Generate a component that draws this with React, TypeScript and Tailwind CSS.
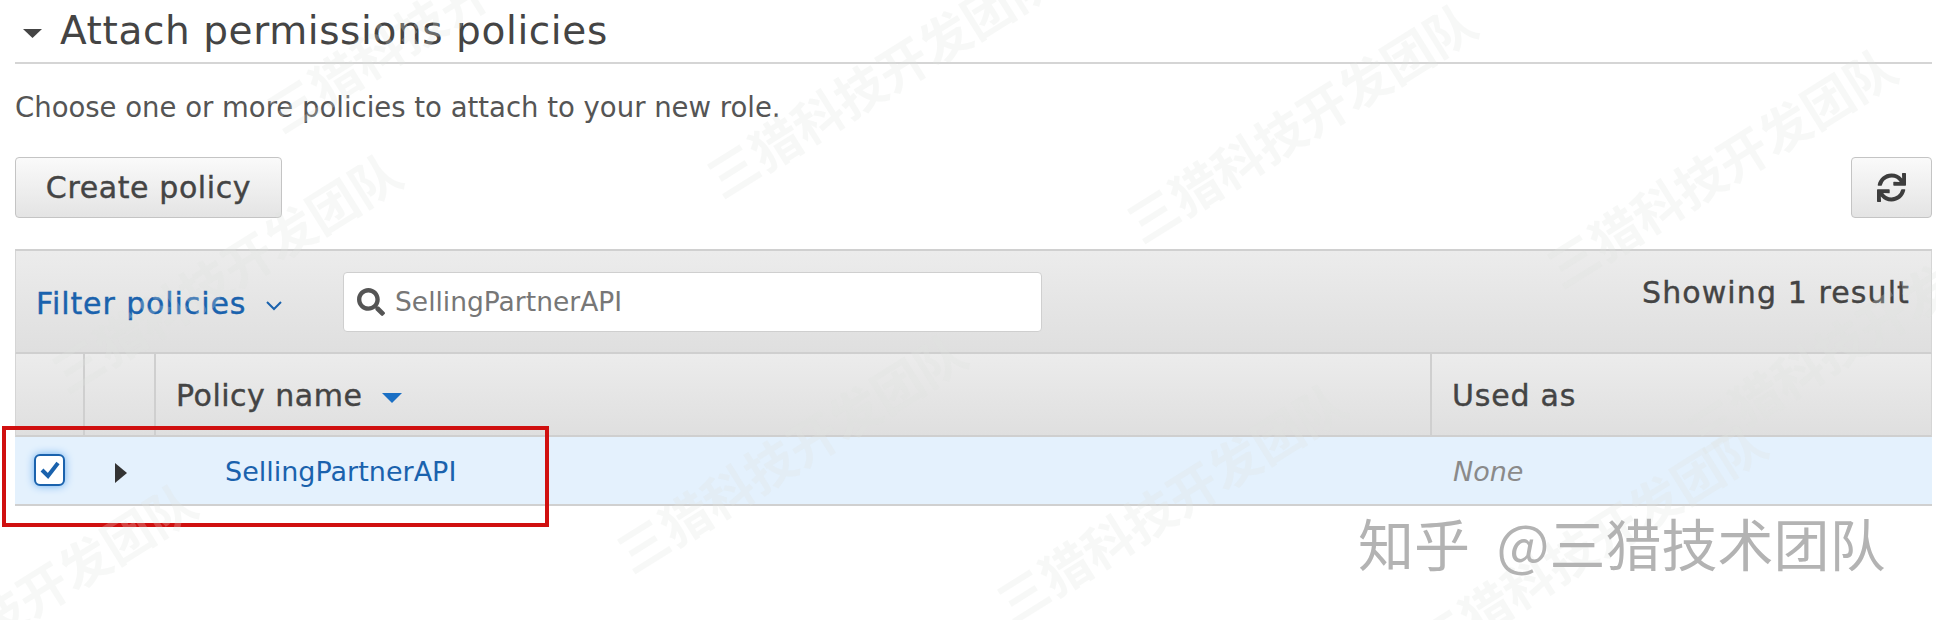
import { FaSearch, FaSync } from 'react-icons/fa'

const marks = [
  { x: 880, y: 75 },
  { x: 1300, y: 120 },
  { x: 1720, y: 165 },
  { x: 225, y: 270 },
  { x: 790, y: 450 },
  { x: 1170, y: 500 },
  { x: 1590, y: 540 },
  { x: 440, y: 10 },
  { x: 1860, y: 330 },
  { x: 20, y: 600 },
]

export default function App() {
  return (
    <div className="relative h-[620px] w-[1936px] overflow-hidden bg-white pl-[15px] pr-[4px] font-['DejaVu_Sans',sans-serif] text-[#444]">
      {/* Attach section */}
      <div className="flex h-[64px] items-start border-b-2 border-[#d5d5d5]">
        <svg className="ml-[8px] mt-[29px] h-[9px] w-[19px]" viewBox="0 0 19 9">
          <path d="M0 0h19l-9.500 9z" fill="#444" />
        </svg>
        <h2 className="ml-[18px] mt-[7px] whitespace-nowrap text-[39px] leading-[48px] tracking-[0.6px]">Attach permissions policies</h2>
      </div>
      <p className="mt-[28px] whitespace-nowrap text-[27.5px] leading-[30px] text-[#555]">Choose one or more policies to attach to your new role.</p>

      <div className="mt-[35px] flex items-start justify-between">
        <button className="h-[61px] w-[267px] rounded-[4px] border border-[#c4c4c4] bg-gradient-to-b from-[#fafafa] to-[#e4e4e4] text-[30px] tracking-[0.6px] text-[#444] [-webkit-text-stroke:0.4px]">
          Create policy
        </button>
        <button className="flex h-[61px] w-[81px] items-center justify-center rounded-[4px] border border-[#c4c4c4] bg-gradient-to-b from-[#fafafa] to-[#e4e4e4]">
          <FaSync className="h-[29px] w-[29px] text-[#3d3d3d]" />
        </button>
      </div>

      {/* Policies table */}
      <div className="mt-[31px] border-t-2 border-[#d0d0d0]">
        <div className="flex h-[103px] border-b-2 border-[#cfcfcf] bg-gradient-to-b from-[#ececec] to-[#dfdfdf] border-x border-x-[#d5d5d5]">
          <div className="flex h-full w-[327px] items-center pl-[20px] pt-[3px]">
            <span className="whitespace-nowrap text-[30px] tracking-[0.9px] text-[#1a62ad] [-webkit-text-stroke:0.4px]">Filter policies</span>
            <svg className="ml-[20px] mt-[6px] h-[10px] w-[16px] shrink-0" viewBox="0 0 16 10" fill="none" stroke="#1a62ad" strokeWidth="2">
              <path d="M1 1l7 7 7-7" />
            </svg>
          </div>
          <div className="mt-[21px] flex h-[60px] w-[699px] items-center rounded-[4px] border border-[#cfcfcf] bg-white pl-[13px]">
            <FaSearch className="h-[28px] w-[28px] text-[#555]" />
            <span className="ml-[10px] text-[26.5px] text-[#777]">SellingPartnerAPI</span>
          </div>
          <div className="flex-1 whitespace-nowrap pr-[21px] pt-[25px] text-right text-[30px] leading-[34px] tracking-[1.1px] text-[#444] [-webkit-text-stroke:0.4px]">Showing 1 result</div>
        </div>

        <div className="flex h-[83px] border-x border-x-[#d5d5d5] border-b-2 border-[#cfcfcf] bg-gradient-to-b from-[#ececec] to-[#dfdfdf] pt-[2px] text-[30px] text-[#444] [-webkit-text-stroke:0.4px]">
          <div className="-mt-[2px] w-[69px] border-r-2 border-[#cfcfcf]" />
          <div className="-mt-[2px] w-[71px] border-r-2 border-[#cfcfcf]" />
          <div className="-mt-[2px] flex w-[1276px] items-center border-r-2 border-[#cfcfcf] pl-[20px] pt-[2px]">
            <span className="tracking-[0.5px]">Policy name</span>
            <svg className="ml-[20px] mt-[5px] h-[10px] w-[20px]" viewBox="0 0 20 10">
              <path d="M0 0h20l-10 10z" fill="#1a6fc4" />
            </svg>
          </div>
          <div className="flex flex-1 items-center pl-[20px] tracking-[0.8px]">Used as</div>
        </div>

        <div className="flex h-[69px] items-center border-b-2 border-[#d0d0d0] bg-[#e4f1fd] pt-[4px]">
          <div className="flex w-[69px] justify-center pb-[6px]">
            <div className="flex h-[32px] w-[31px] items-center justify-center rounded-[6px] border-2 border-[#1a62ad] bg-white shadow-[0_0_8px_#6aaef0]">
              <svg className="h-[20px] w-[22px]" viewBox="0 0 22 20" fill="none" stroke="#1a62ad" strokeWidth="4">
                <path d="M3 10l6 6L19 3" />
              </svg>
            </div>
          </div>
          <div className="flex w-[71px] justify-center pl-[3px]">
            <svg className="h-[20px] w-[12px]" viewBox="0 0 12 20">
              <path d="M0 0l12 10L0 20z" fill="#333" />
            </svg>
          </div>
          <div className="w-[1276px] pl-[70px] text-[27px] text-[#1a62ad]">SellingPartnerAPI</div>
          <div className="flex-1 pl-[22px] text-[27px] italic text-[#8a8a8a]">None</div>
        </div>
      </div>

      {/* Red highlight drawn on top of the screenshot */}
      <div className="absolute left-[2px] top-[426px] h-[101px] w-[547px] border-[4px] border-[#d01010]" />

      {/* Site watermarks */}
      {marks.map((m, i) => (
        <span
          key={i}
          className="absolute -rotate-[32deg] whitespace-nowrap font-['Noto_Sans_CJK_SC',sans-serif] text-[50px] font-bold leading-[60px] text-[#dfe2df]/25"
          style={{ left: m.x - 200, top: m.y - 30 }}
        >
          三猎科技开发团队
        </span>
      ))}
      <span className="absolute left-[1358px] top-[505px] whitespace-nowrap font-['Noto_Sans_CJK_SC',sans-serif] text-[56px] leading-[74px] text-[#b3b3b3] [word-spacing:14px]">
        知乎 @三猎技术团队
      </span>
    </div>
  )
}
